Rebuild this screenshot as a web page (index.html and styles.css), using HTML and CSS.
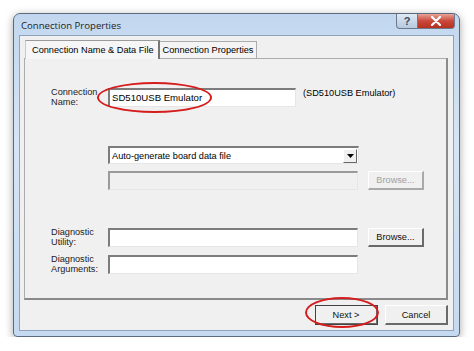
FILE: index.html
```html
<!DOCTYPE html>
<html lang="en">
<head>
    <meta charset="UTF-8">
    <title>Connection Properties</title>
    <link rel="stylesheet" href="styles.css">
</head>
<body>
    <div class="window">
        <div class="titlebar">
            <span class="title">Connection Properties</span>
            <div class="caption-buttons">
                <span class="cap-btn help">?</span>
                <span class="cap-btn close">
                    <svg width="12" height="10" viewBox="0 0 12 10"><path d="M2 1 L10 9 M10 1 L2 9" stroke="#fff" stroke-width="2.2" stroke-linecap="round"/></svg>
                </span>
            </div>
        </div>
        <div class="client">
            <div class="tabs">
                <span class="tab active">Connection Name &amp; Data File</span>
                <span class="tab">Connection Properties</span>
            </div>
            <div class="panel">
                <div class="row name-row">
                    <label class="lbl">Connection<br>Name:</label>
                    <input class="field name-field" type="text" value="SD510USB Emulator">
                    <span class="note">(SD510USB Emulator)</span>
                </div>
                <div class="row select-row">
                    <div class="select">
                        <span>Auto-generate board data file</span>
                        <span class="arrow">
                            <svg width="7" height="4" viewBox="0 0 7 4"><path d="M0 0 H7 L3.5 4 Z" fill="#000"/></svg>
                        </span>
                    </div>
                </div>
                <div class="row file-row">
                    <input class="field wide disabled" type="text" disabled>
                    <button class="btn" disabled>Browse...</button>
                </div>
                <div class="row diag-row">
                    <label class="lbl">Diagnostic<br>Utility:</label>
                    <input class="field wide" type="text">
                    <button class="btn">Browse...</button>
                </div>
                <div class="row args-row">
                    <label class="lbl">Diagnostic<br>Arguments:</label>
                    <input class="field wide" type="text">
                </div>
            </div>
            <div class="footer">
                <button class="btn big default">Next &gt;</button>
                <button class="btn big">Cancel</button>
            </div>
        </div>
    </div>

    <!-- red markings drawn over the screenshot -->
    <div class="mark mark-name"></div>
    <div class="mark mark-next"></div>
</body>
</html>
```

FILE: styles.css
```css
body {
    margin: 0;
    background: #fff;
    font-family: "Liberation Sans", Arial, sans-serif;
    font-size: 9.2px;
    color: #000;
}

.window {
    margin: 13px 0 0 13px;
    width: 447px;
    height: 324px;
    box-sizing: border-box;
    border: 1px solid #5b6a7e;
    border-radius: 7px 7px 4px 4px;
    background: linear-gradient(#c2d7ef, #d6e5f5 40%, #c5daf1);
    box-shadow: 0 2px 8px rgba(0, 0, 0, 0.35);
    padding: 0 5px 5px 5px;
    display: flex;
    flex-direction: column;
}

.titlebar {
    height: 21px;
    display: flex;
    justify-content: space-between;
    align-items: flex-start;
}

.title {
    font-family: "Open Sans", "Liberation Sans", sans-serif;
    font-size: 9.6px;
    color: #1e1e1e;
    padding: 5px 0 0 2px;
}

.caption-buttons {
    display: flex;
    margin-right: -1px;
}

.cap-btn {
    height: 15px;
    display: flex;
    align-items: center;
    justify-content: center;
    border: 1px solid #6d7a8c;
    border-top: none;
    box-sizing: border-box;
}

.help {
    width: 22px;
    border-radius: 0 0 0 4px;
    background: linear-gradient(#dfe9f5, #b6c9df);
    color: #3b4a5e;
    font-weight: bold;
    font-size: 11px;
}

.close {
    width: 37px;
    border-left: none;
    border-radius: 0 0 4px 0;
    background: linear-gradient(#e8a496, #c9473a 50%, #b8311f);
}

.client {
    flex: 1;
    background: #f0f0f0;
    border: 1px solid #8ea2bd;
    padding: 4px 5px 5px 4px;
    display: flex;
    flex-direction: column;
}

.tabs {
    display: flex;
    height: 18px;
    align-items: flex-end;
    padding-left: 1px;
}

.tab {
    height: 16px;
    line-height: 16px;
    padding: 0 3px;
    border: 1px solid #acacac;
    border-bottom: none;
    border-left: none;
    background: #f4f4f4;
    white-space: nowrap;
}

.tab.active {
    height: 18px;
    line-height: 18px;
    padding: 0 4px 0 6px;
    background: #f6f6f6;
    border-color: #9a9a9a;
    border-left: 1px solid #c8c8c8;
    border-right: 2px solid #777;
    position: relative;
    top: 1px;
}

.panel {
    height: 242px;
    box-sizing: border-box;
    border: 1px solid #acacac;
    border-right: 2px solid #8a8a8a;
    border-bottom: 2px solid #8a8a8a;
    background: #f0f0f0;
    padding: 28px 0 0 26px;
    display: flex;
    flex-direction: column;
}

.row {
    display: flex;
    align-items: center;
}

.lbl {
    width: 57px;
    line-height: 10px;
    color: #222;
}

.field {
    height: 19px;
    box-sizing: border-box;
    border: 1px solid #e6e6e6;
    border-top: 2px solid #7c7c7c;
    border-left: 2px solid #7c7c7c;
    background: #fff;
    font-family: "Liberation Sans", Arial, sans-serif;
    font-size: 9.2px;
    padding: 1px 2px;
    margin: 0;
}

.name-field {
    width: 188px;
    font-size: 9.6px;
}

.note {
    margin-left: 7px;
    align-self: flex-start;
    margin-top: 1px;
}

.select-row {
    margin: 39px 0 0 57px;
}

.select {
    width: 251px;
    height: 18px;
    box-sizing: border-box;
    border: 1px solid #e6e6e6;
    border-top: 2px solid #7c7c7c;
    border-left: 2px solid #7c7c7c;
    background: #fff;
    display: flex;
    align-items: center;
    justify-content: space-between;
    padding-left: 2px;
}

.arrow {
    width: 14px;
    height: 14px;
    box-sizing: border-box;
    background: #f0f0f0;
    border: 1px solid #fff;
    border-right-color: #696969;
    border-bottom-color: #696969;
    display: flex;
    align-items: center;
    justify-content: center;
    margin-right: 1px;
}

.wide {
    width: 250px;
}

.disabled {
    background: #f0f0f0;
    border-color: #e6e6e6 #e6e6e6 #e6e6e6 #9a9a9a;
    border-top-color: #9a9a9a;
}

.file-row {
    margin: 7px 0 0 57px;
}

.diag-row {
    margin-top: 37px;
}

.args-row {
    margin-top: 7px;
}

.btn {
    width: 56px;
    height: 19px;
    margin-left: 10px;
    box-sizing: border-box;
    border: 1px solid #fff;
    border-right: 2px solid #6a6a6a;
    border-bottom: 2px solid #6a6a6a;
    background: #f0f0f0;
    font-family: "Liberation Sans", Arial, sans-serif;
    font-size: 9.2px;
    color: #111;
    padding: 0;
}

.btn:disabled {
    color: #a0a0a0;
    border-right-color: #a9a9a9;
    border-bottom-color: #a9a9a9;
}

.footer {
    display: flex;
    justify-content: flex-end;
    padding-top: 5px;
    gap: 7px;
    padding-right: 0;
}

.big {
    width: 63px;
    height: 20px;
    margin-left: 0;
}

.default {
    outline: 1px solid #444;
    outline-offset: -1px;
}

.mark {
    position: absolute;
    border: 2px solid #d61d1d;
    border-radius: 50%;
    box-sizing: border-box;
}

.mark-name {
    left: 97px;
    top: 82px;
    width: 115px;
    height: 31px;
}

.mark-next {
    left: 305px;
    top: 297px;
    width: 74px;
    height: 31px;
}
```
